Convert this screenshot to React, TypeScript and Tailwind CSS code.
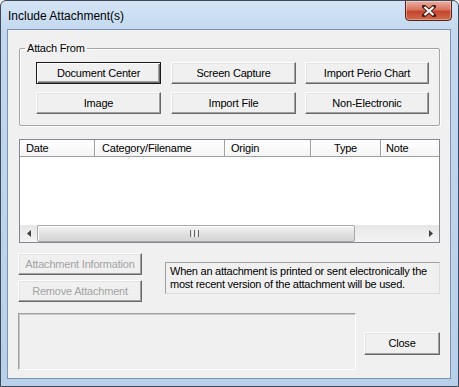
import React from 'react';

// classic 3D push button look
const btnBase = 'h-[22px] flex items-center justify-center bg-[#f0f0f0] text-[11px] leading-none border';
const btnNormal =
  'border-t-white border-l-white border-r-[#696969] border-b-[#696969] shadow-[inset_-1px_-1px_0_#a0a0a0,inset_1px_1px_0_#e3e3e3]';
const btnDefault =
  'border-[#1a1a1a] shadow-[inset_1px_1px_0_#fff,inset_-1px_-1px_0_#696969,inset_-2px_-2px_0_#a0a0a0]';

const WinButton = ({
  label,
  className,
  isDefault,
  disabled,
}: {
  label: string;
  className: string;
  isDefault?: boolean;
  disabled?: boolean;
}) => (
  <div
    className={`${btnBase} ${isDefault ? btnDefault : btnNormal} ${
      disabled ? 'text-[#a3a3a3]' : 'text-black'
    } ${className}`}
  >
    {label}
  </div>
);

const HeaderCell = ({ label, className }: { label: string; className: string }) => (
  <div
    className={`h-full flex items-center border-r border-r-[#a0a0a0] shadow-[inset_1px_0_0_#fff] ${className}`}
  >
    {label}
  </div>
);

export default function App() {
  return (
    <div className="w-[459px] h-[387px] flex flex-col rounded-t-[6px] border border-[#3e4a57] bg-[linear-gradient(to_bottom,#d4e4f5,#c3d8ef_30px,#b9d0ea)] font-['Liberation_Sans',Arial,sans-serif] text-black overflow-hidden">
      {/* title bar */}
      <div className="h-[28px] flex items-start justify-between">
        <div className="pl-[7px] pt-[8px] text-[12px] leading-[14px] text-black">Include Attachment(s)</div>
        <div className="mr-[6px] -mt-px w-[47px] h-[21px] flex items-center justify-center rounded-b-[4px] border border-[#5a2018] bg-[linear-gradient(to_bottom,#eab0a3,#d87561_45%,#c7452d_55%,#cf6a4c)] shadow-[inset_0_0_0_1px_rgba(255,255,255,0.35)]">
          <svg width="14" height="12" viewBox="0 0 14 12">
            <path
              d="M2 1.5 L12 10.5 M12 1.5 L2 10.5"
              stroke="#4a1d14"
              strokeWidth="4"
              strokeLinecap="square"
            />
            <path d="M2.5 2 L11.5 10 M11.5 2 L2.5 10" stroke="#fff" strokeWidth="2.2" />
          </svg>
        </div>
      </div>

      {/* client area */}
      <div className="ml-[6px] mr-[7px] h-[350px] border border-[#7f93ad] bg-[#f0f0f0] flex flex-col text-[11px] tracking-[-0.2px]">
        <fieldset className="mt-[11px] ml-[11px] w-[421px] border border-[#a5a5a5] rounded-[2px] shadow-[inset_1px_1px_0_#fff,1px_1px_0_#fff]">
          <legend className="ml-[5px] px-[2px] leading-[14px] text-[11px]">Attach From</legend>
          <div className="pl-[16px] pt-[7px] pb-[11px] flex flex-col gap-[8px]">
            <div className="flex">
              <WinButton label="Document Center" className="w-[125px]" isDefault />
              <WinButton label="Screen Capture" className="w-[125px] ml-[10px]" />
              <WinButton label="Import Perio Chart" className="w-[124px] ml-[9px]" />
            </div>
            <div className="flex">
              <WinButton label="Image" className="w-[125px]" />
              <WinButton label="Import File" className="w-[125px] ml-[10px]" />
              <WinButton label="Non-Electronic" className="w-[124px] ml-[9px]" />
            </div>
          </div>
        </fieldset>

        {/* list view */}
        <div className="mt-[13px] ml-[11px] w-[421px] h-[104px] border border-[#828790] bg-white flex flex-col">
          <div className="h-[17px] flex border-b border-b-[#a0a0a0] bg-[linear-gradient(to_bottom,#ffffff,#f4f4f4)] overflow-hidden shrink-0">
            <HeaderCell label="Date" className="w-[75px] pl-[6px] shrink-0" />
            <HeaderCell label="Category/Filename" className="w-[130px] pl-[7px] shrink-0" />
            <HeaderCell label="Origin" className="w-[86px] pl-[6px] shrink-0" />
            <HeaderCell label="Type" className="w-[70px] justify-center shrink-0" />
            <div className="h-full flex items-center pl-[5px] shadow-[inset_1px_0_0_#fff] flex-1">Note</div>
          </div>
          <div className="flex-1" />
          {/* horizontal scrollbar */}
          <div className="h-[17px] flex bg-[linear-gradient(to_bottom,#e6e6e6,#f4f4f4)] shrink-0">
            <div className="w-[17px] h-full flex items-center justify-center">
              <svg width="4" height="7" viewBox="0 0 4 7">
                <path d="M4 0 L0 3.5 L4 7 Z" fill="#404040" />
              </svg>
            </div>
            <div className="w-[318px] h-full rounded-[2px] border border-[#a8a8a8] bg-[linear-gradient(to_bottom,#f3f3f3,#e2e2e2_50%,#d4d4d4)] shadow-[inset_1px_1px_0_#fff] flex items-center justify-center">
              <div className="flex gap-[1px] h-[7px] -ml-[3px]">
                <div className="w-[1px] h-full bg-[#6a6a6a]" />
                <div className="w-[1px] h-full bg-[#f6f6f6]" />
                <div className="w-[1px] h-full bg-[#6a6a6a]" />
                <div className="w-[1px] h-full bg-[#f6f6f6]" />
                <div className="w-[1px] h-full bg-[#6a6a6a]" />
              </div>
            </div>
            <div className="flex-1" />
            <div className="w-[17px] h-full flex items-center justify-center">
              <svg width="4" height="7" viewBox="0 0 4 7">
                <path d="M0 0 L4 3.5 L0 7 Z" fill="#404040" />
              </svg>
            </div>
          </div>
        </div>

        {/* action buttons + note */}
        <div className="mt-[10px] ml-[10px] flex items-start">
          <div className="flex flex-col gap-[5px]">
            <WinButton label="Attachment Information" className="w-[124px]" disabled />
            <WinButton label="Remove Attachment" className="w-[124px]" disabled />
          </div>
          <div className="mt-[9px] ml-[23px] w-[275px] h-[32px] border border-t-[#a0a0a0] border-l-[#a0a0a0] border-r-[#dcdcdc] border-b-[#dcdcdc] pl-[4px] pt-[2px] leading-[13px] text-[11px] tracking-[-0.25px]">
            When an attachment is printed or sent electronically the most recent version of the attachment will be used.
          </div>
        </div>

        <div className="mt-[11px] ml-[10px] flex items-start">
          <div className="w-[338px] h-[57px] border border-t-[#a0a0a0] border-l-[#a0a0a0] border-r-white border-b-white shadow-[inset_1px_1px_0_#c8c8c8]" />
          <WinButton label="Close" className="w-[76px] ml-[8px] mt-[19px] h-[23px]" />
        </div>
      </div>
    </div>
  );
}
